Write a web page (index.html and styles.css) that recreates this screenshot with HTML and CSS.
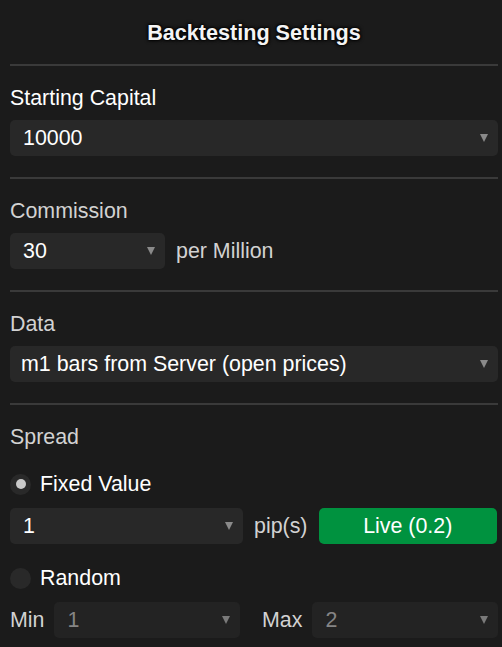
FILE: index.html
```html
<!DOCTYPE html>
<html>
<head>
<meta charset="utf-8">
<link rel="stylesheet" href="styles.css">
</head>
<body>
<div class="panel">
  <h1 class="title">Backtesting Settings</h1>

  <section class="section">
    <div class="label label-bright">Starting Capital</div>
    <div class="select"><span>10000</span><i class="caret"></i></div>
  </section>

  <section class="section">
    <div class="label">Commission</div>
    <div class="row">
      <div class="select select-small"><span>30</span><i class="caret"></i></div>
      <span class="unit">per Million</span>
    </div>
  </section>

  <section class="section">
    <div class="label">Data</div>
    <div class="select select-data"><span>m1 bars from Server (open prices)</span><i class="caret"></i></div>
  </section>

  <section class="section section-last">
    <div class="label label-spread">Spread</div>

    <div class="radio"><span class="dot dot-on"></span><span>Fixed Value</span></div>
    <div class="row spread-row">
      <div class="select select-spread"><span>1</span><i class="caret"></i></div>
      <span class="unit">pip(s)</span>
      <button class="live">Live (0.2)</button>
    </div>

    <div class="radio radio-random"><span class="dot"></span><span>Random</span></div>
    <div class="row minmax">
      <span class="unit">Min</span>
      <div class="select select-disabled"><span>1</span><i class="caret"></i></div>
      <span class="unit unit-max">Max</span>
      <div class="select select-disabled"><span>2</span><i class="caret"></i></div>
    </div>
  </section>
</div>
</body>
</html>
```

FILE: styles.css
```css
* { box-sizing: border-box; }
html, body {
  margin: 0;
  padding: 0;
  background: #1b1b1b;
}
body {
  font-family: "Liberation Sans", Arial, sans-serif;
  font-size: 21.4px;
  line-height: 24px;
  color: #ffffff;
}
.panel {
  width: 502px;
  height: 647px;
  padding: 0 4px 0 10px;
  overflow: hidden;
}
.title {
  margin: 0;
  padding: 21px 0 19px;
  font-size: 21.6px;
  line-height: 24px;
  font-weight: bold;
  text-align: center;
  color: #f4f4f4;
  text-shadow: 0 0 2px #000, 0 0 3px #000, 0 0 4px #000;
  border-bottom: 2px solid #3a3a3a;
}
.section {
  padding: 20px 0 21px;
  border-bottom: 2px solid #3a3a3a;
}
.section-last { border-bottom: none; }
.label {
  color: #d2d2d2;
  margin-bottom: 10px;
}
.label-bright { color: #ffffff; }
.label-spread { margin-bottom: 23px; }
.select {
  position: relative;
  display: flex;
  align-items: center;
  height: 36px;
  padding: 0 30px 0 13px;
  background: #282828;
  border-radius: 5px;
  color: #ffffff;
  white-space: nowrap;
}
.select-data { padding-left: 11px; }
.select-small { width: 155px; flex: none; }
.select-spread { width: 233px; flex: none; }
.caret {
  position: absolute;
  right: 10px;
  top: 14px;
  width: 0;
  height: 0;
  border-left: 4.5px solid transparent;
  border-right: 4.5px solid transparent;
  border-top: 8px solid #8a8a8a;
}
.select-disabled {
  flex: 1;
  background: #232323;
  color: #858585;
}
.select-disabled .caret { border-top-color: #7a7a7a; }
.row {
  display: flex;
  align-items: center;
  gap: 11px;
}
.unit { color: #d2d2d2; white-space: nowrap; }
.radio {
  display: flex;
  align-items: center;
  height: 24px;
  color: #ffffff;
  margin-bottom: 12px;
}
.radio-random { margin-top: 22px; }
.dot {
  width: 21px;
  height: 21px;
  border-radius: 50%;
  background: #292929;
  margin-right: 9px;
  display: flex;
  align-items: center;
  justify-content: center;
  flex: none;
}
.dot-on::after {
  content: "";
  width: 10px;
  height: 10px;
  border-radius: 50%;
  background: #c9c9c9;
}
.live {
  flex: 1;
  height: 36px;
  border: none;
  border-radius: 5px;
  background: #00923f;
  color: #ffffff;
  font-family: inherit;
  font-size: 21.4px;
  padding: 0;
  margin-right: 1px;
}
.minmax { gap: 10px; }
.unit-max { margin-left: 12px; }
```
